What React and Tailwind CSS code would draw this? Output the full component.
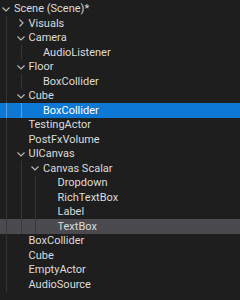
import React from 'react';

const TREE = [
  { name: 'Scene (Scene)*', open: true, children: [
    { name: 'Visuals', open: false, children: [{ name: 'x' }] },
    { name: 'Camera', open: true, children: [{ name: 'AudioListener' }] },
    { name: 'Floor', open: true, children: [{ name: 'BoxCollider' }] },
    { name: 'Cube', open: true, children: [{ name: 'BoxCollider', selected: true }] },
    { name: 'TestingActor' },
    { name: 'PostFxVolume' },
    { name: 'UICanvas', open: true, children: [
      { name: 'Canvas Scalar', open: true, children: [
        { name: 'Dropdown' },
        { name: 'RichTextBox' },
        { name: 'Label' },
        { name: 'TextBox', hovered: true },
      ] },
    ] },
    { name: 'BoxCollider' },
    { name: 'Cube' },
    { name: 'EmptyActor' },
    { name: 'AudioSource' },
  ] },
];

const flatten = (nodes, depth = 0, out = []) => {
  nodes.forEach((n) => {
    out.push({ ...n, depth });
    if (n.children && n.open) flatten(n.children, depth + 1, out);
  });
  return out;
};

const Chevron = ({ open, color }) => (
  <svg width="12" height="12" viewBox="0 0 12 12" fill="none" stroke={color} strokeWidth="1.1">
    {open ? <path d="M2.5 4.5 L6 8 L9.5 4.5" /> : <path d="M4.5 2.5 L8 6 L4.5 9.5" />}
  </svg>
);

const Row = ({ node }) => {
  const { depth, selected, hovered } = node;
  const bg = selected ? 'bg-[#0e78d5]' : hovered ? 'bg-[#4a4a4f]' : '';
  const line = selected ? 'bg-[#5ba1e2]' : hovered ? 'bg-[#38383c]' : 'bg-[#353535]';
  const text = selected ? 'text-white' : 'text-[#dcdcdc]';
  const hasKids = !!node.children;

  return (
    <div className={`flex h-[14.5px] items-stretch ${bg}`}>
      {Array.from({ length: depth }).map((_, i) => (
        <div key={i} className="w-[14.5px] shrink-0 flex">
          <div className={`ml-[6px] w-px ${line}`} />
        </div>
      ))}
      <div className="w-3 shrink-0 flex items-center">
        {hasKids && <Chevron open={node.open} color={selected ? '#ffffff' : '#bdbdbd'} />}
      </div>
      <div className={`ml-[2px] flex items-center text-[11px] leading-none whitespace-nowrap ${text}`}>
        {node.name}
      </div>
    </div>
  );
};

export default function App() {
  const rows = flatten(TREE);
  return (
    <div
      className="w-[240px] h-[300px] overflow-hidden bg-[#1e1e1e] pt-[1.5px] flex flex-col"
      style={{ fontFamily: 'Roboto, "Noto Sans", sans-serif' }}
    >
      {rows.map((n, i) => (
        <Row key={i} node={n} />
      ))}
    </div>
  );
}
